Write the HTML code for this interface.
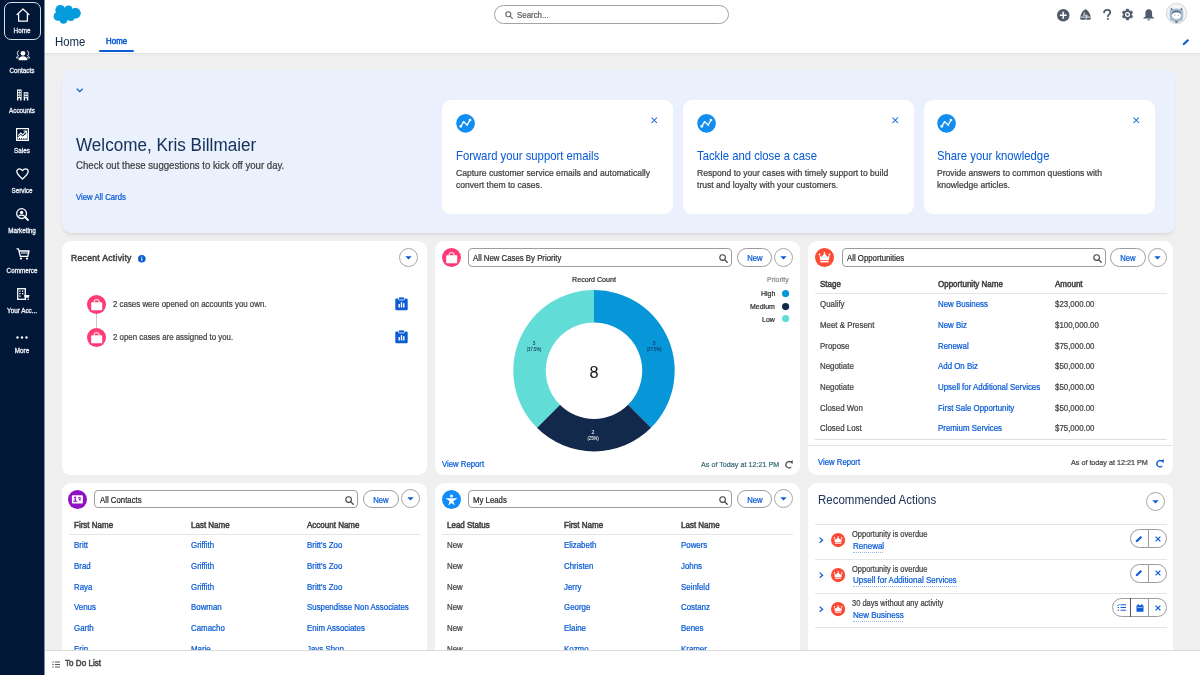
<!DOCTYPE html><html><head><meta charset="utf-8"><style>
html,body{margin:0;padding:0;width:1200px;height:675px;overflow:hidden;background:#f0f0f0;font-family:"Liberation Sans",sans-serif;}
.r{position:absolute;box-sizing:border-box;}
.t{position:absolute;line-height:1;white-space:nowrap;-webkit-text-stroke-width:0.22px;will-change:transform;}
svg.r{overflow:visible}
</style></head><body>

<div class="r" style="left:44.00px;top:0.00px;width:1156.00px;height:53.00px;background:#ffffff;"></div>
<div class="r" style="left:44.00px;top:52.50px;width:1156.00px;height:1.20px;background:#e2e2e2;box-shadow:0 1px 2px rgba(0,0,0,0.04);"></div>
<div class="r" style="left:0.00px;top:0.00px;width:44.00px;height:675.00px;background:#011738;"></div>
<div class="r" style="left:4.00px;top:2.00px;width:37.00px;height:38.00px;border:1px solid #d8dde6;border-radius:7px;"></div>
<svg class="r" style="left:15.50px;top:8.00px" width="14" height="14" viewBox="0 0 14 14"><path d="M1 6.6 L7 1 L13 6.6" fill="none" stroke="#fff" stroke-width="1.25" stroke-linejoin="round" stroke-linecap="round"/><path d="M2.6 5.3 V13 H11.4 V5.3" fill="none" stroke="#fff" stroke-width="1.25" stroke-linejoin="round"/></svg>
<div class="t" style="left:-78.00px;width:200px;text-align:center;top:28.46px;font-size:6.3px;color:#eef0f4;font-weight:normal;-webkit-text-stroke-width:0.3px;">Home</div>
<div class="t" style="left:-78.00px;width:200px;text-align:center;top:68.46px;font-size:6.3px;color:#eef0f4;font-weight:normal;-webkit-text-stroke-width:0.3px;">Contacts</div>
<div class="t" style="left:-78.00px;width:200px;text-align:center;top:108.46px;font-size:6.3px;color:#eef0f4;font-weight:normal;-webkit-text-stroke-width:0.3px;">Accounts</div>
<div class="t" style="left:-78.00px;width:200px;text-align:center;top:148.46px;font-size:6.3px;color:#eef0f4;font-weight:normal;-webkit-text-stroke-width:0.3px;">Sales</div>
<div class="t" style="left:-78.00px;width:200px;text-align:center;top:188.46px;font-size:6.3px;color:#eef0f4;font-weight:normal;-webkit-text-stroke-width:0.3px;">Service</div>
<div class="t" style="left:-78.00px;width:200px;text-align:center;top:228.46px;font-size:6.3px;color:#eef0f4;font-weight:normal;-webkit-text-stroke-width:0.3px;">Marketing</div>
<div class="t" style="left:-78.00px;width:200px;text-align:center;top:268.46px;font-size:6.3px;color:#eef0f4;font-weight:normal;-webkit-text-stroke-width:0.3px;">Commerce</div>
<div class="t" style="left:-78.00px;width:200px;text-align:center;top:307.96px;font-size:6.3px;color:#eef0f4;font-weight:normal;-webkit-text-stroke-width:0.3px;">Your Acc...</div>
<div class="t" style="left:-78.00px;width:200px;text-align:center;top:348.46px;font-size:6.3px;color:#eef0f4;font-weight:normal;-webkit-text-stroke-width:0.3px;">More</div>
<svg class="r" style="left:15.50px;top:49.50px" width="14" height="11" viewBox="0 0 14 11"><path d="M3.2 1 C1.9 1 1.3 2 1.3 3.2 C1.3 4.5 1.9 5.4 2.6 5.8 C1.2 6.3 0.4 7 0.4 8 H3" fill="none" stroke="#fff" stroke-width="0.9"/><path d="M10.8 1 C12.1 1 12.7 2 12.7 3.2 C12.7 4.5 12.1 5.4 11.4 5.8 C12.8 6.3 13.6 7 13.6 8 H11" fill="none" stroke="#fff" stroke-width="0.9"/><circle cx="7" cy="3.3" r="2.4" fill="#fff"/><path d="M2.6 10.3 C2.6 7.6 4.4 6.3 7 6.3 C9.6 6.3 11.4 7.6 11.4 10.3Z" fill="#fff"/></svg>
<svg class="r" style="left:16.80px;top:88.80px" width="12" height="12" viewBox="0 0 12 12"><path d="M0 0.6 H4.6 V11.4 H3.2 V9.2 H1.4 V11.4 H0Z" fill="#fff"/><path d="M6.7 3.2 H11.3 V11.4 H9.9 V9.2 H8.1 V11.4 H6.7Z" fill="#fff"/><g fill="#011738"><rect x="0.9" y="1.8" width="1.2" height="1.4"/><rect x="2.6" y="1.8" width="1.2" height="1.4"/><rect x="0.9" y="4.2" width="1.2" height="1.4"/><rect x="2.6" y="4.2" width="1.2" height="1.4"/><rect x="0.9" y="6.6" width="1.2" height="1.4"/><rect x="2.6" y="6.6" width="1.2" height="1.4"/><rect x="7.6" y="4.4" width="1.2" height="1.4"/><rect x="9.3" y="4.4" width="1.2" height="1.4"/><rect x="7.6" y="6.8" width="1.2" height="1.4"/><rect x="9.3" y="6.8" width="1.2" height="1.4"/></g></svg>
<svg class="r" style="left:16.00px;top:128.00px" width="13" height="13" viewBox="0 0 13 13"><rect x="0.6" y="0.6" width="11.8" height="11.8" fill="none" stroke="#fff" stroke-width="1.2"/><path d="M2.2 7.6 L4.8 5 L6.6 6.8 L10 3.4" fill="none" stroke="#fff" stroke-width="1.1"/><path d="M7.6 3 H10.4 V5.8" fill="none" stroke="#fff" stroke-width="1.1"/><path d="M1.5 11.5 V9.6 L4.8 6.8 L6.6 8.6 L11.5 4.8 V11.5Z" fill="#fff"/><g fill="#011738"><rect x="3" y="10" width="0.8" height="1.5"/><rect x="5.2" y="10" width="0.8" height="1.5"/><rect x="7.4" y="10" width="0.8" height="1.5"/><rect x="9.6" y="10" width="0.8" height="1.5"/></g></svg>
<svg class="r" style="left:15.50px;top:168.00px" width="13" height="12" viewBox="0 0 13 12"><path d="M6.5 11 C3 8 0.8 6 0.8 3.6 C0.8 2 2 0.8 3.5 0.8 C4.7 0.8 5.8 1.6 6.5 2.6 C7.2 1.6 8.3 0.8 9.5 0.8 C11 0.8 12.2 2 12.2 3.6 C12.2 6 10 8 6.5 11Z" fill="none" stroke="#fff" stroke-width="1.3" stroke-linejoin="round"/></svg>
<svg class="r" style="left:16.00px;top:208.00px" width="13" height="13" viewBox="0 0 13 13"><circle cx="5.6" cy="5.6" r="4.9" fill="none" stroke="#fff" stroke-width="1.3"/><circle cx="5.6" cy="4.4" r="1.7" fill="#fff"/><path d="M2.8 8.3 C3.5 6.8 7.7 6.8 8.4 8.3" fill="none" stroke="#fff" stroke-width="1.2"/><path d="M9 9 L12 12" stroke="#fff" stroke-width="1.8" stroke-linecap="round"/></svg>
<svg class="r" style="left:16.00px;top:248.00px" width="14" height="12" viewBox="0 0 14 12"><path d="M0.5 0.8 H2.5 L4.3 8.3 H11.8 L13 3 H3.3" fill="none" stroke="#fff" stroke-width="1.3" stroke-linejoin="round"/><circle cx="5" cy="10.6" r="1.1" fill="#fff"/><circle cx="11" cy="10.6" r="1.1" fill="#fff"/><path d="M5 5 H12" stroke="#fff" stroke-width="1"/></svg>
<svg class="r" style="left:16.50px;top:288.00px" width="13" height="12" viewBox="0 0 13 12"><rect x="0.7" y="0.7" width="7.6" height="10.6" fill="none" stroke="#fff" stroke-width="1.3"/><g fill="#fff"><rect x="2.3" y="2.5" width="1.3" height="1.3"/><rect x="5" y="2.5" width="1.3" height="1.3"/><rect x="2.3" y="5" width="1.3" height="1.3"/><rect x="5" y="5" width="1.3" height="1.3"/><rect x="2.3" y="7.5" width="1.3" height="1.3"/></g><path d="M7 7 H12.5 L11.8 9.8 H7.8Z" fill="#fff"/><circle cx="8.5" cy="11.2" r="0.8" fill="#fff"/><circle cx="11.2" cy="11.2" r="0.8" fill="#fff"/></svg>
<svg class="r" style="left:16.00px;top:336.00px" width="12" height="3" viewBox="0 0 12 3"><circle cx="1.5" cy="1.5" r="1.2" fill="#fff"/><circle cx="6" cy="1.5" r="1.2" fill="#fff"/><circle cx="10.5" cy="1.5" r="1.2" fill="#fff"/></svg>
<svg class="r" style="left:53.00px;top:4.00px" width="29" height="21" viewBox="0 0 29 21"><g fill="#049cdc"><circle cx="7.4" cy="6.1" r="5.1"/><circle cx="15.5" cy="5.5" r="3.9"/><circle cx="22.4" cy="9.2" r="5.4"/><circle cx="4.9" cy="12.4" r="4.3"/><circle cx="10.5" cy="15.6" r="4.2"/><circle cx="17.8" cy="13" r="3.9"/><ellipse cx="14" cy="10.5" rx="9" ry="5.5"/></g></svg>
<div class="r" style="left:494.00px;top:5.00px;width:235.00px;height:18.70px;border:1px solid #a3a3a3;border-radius:10px;background:#fff;"></div>
<svg class="r" style="left:504.50px;top:10.80px" width="8" height="8" viewBox="0 0 8 8"><circle cx="3.3" cy="3.3" r="2.5" fill="none" stroke="#666" stroke-width="1.1"/><path d="M5.1 5.1 L7.3 7.3" stroke="#666" stroke-width="1.2" stroke-linecap="round"/></svg>
<div class="t" style="left:517.00px;top:11.95px;font-size:7.9px;color:#5c5c5c;font-weight:normal;transform:scaleY(1.1);transform-origin:0 5.65px;">Search...</div>
<svg class="r" style="left:1056.60px;top:8.50px" width="12.5" height="12.5" viewBox="0 0 12.5 12.5"><circle cx="6.25" cy="6.25" r="6.25" fill="#4f5b69"/><path d="M6.25 2.8 V9.7 M2.8 6.25 H9.7" stroke="#fff" stroke-width="1.6"/></svg>
<svg class="r" style="left:1080.00px;top:9.20px" width="11" height="11" viewBox="0 0 11 11"><path d="M5.5 0.3 C8.3 1.3 10.8 5.8 10.8 9.2 Q10.8 10.8 9.2 10.8 H1.8 Q0.2 10.8 0.2 9.2 C0.2 5.8 2.7 1.3 5.5 0.3Z" fill="#4f5b69"/><path d="M0.4 8.1 H10.6" stroke="#fff" stroke-width="0.9"/><path d="M4.6 3.4 L3.4 6.2 H7.2 L5.8 10.8" fill="none" stroke="#fff" stroke-width="0.8"/></svg>
<svg class="r" style="left:1102.80px;top:9.20px" width="8.5" height="11" viewBox="0 0 8.5 11"><path d="M1.1 3.4 C1.1 1.6 2.5 0.9 4.2 0.9 C5.9 0.9 7.3 1.8 7.3 3.4 C7.3 5.3 4.9 5.4 4.9 7.3" fill="none" stroke="#4f5b69" stroke-width="1.75" stroke-linecap="round"/><circle cx="4.9" cy="9.9" r="1" fill="#4f5b69"/></svg>
<svg class="r" style="left:1122.30px;top:9.10px" width="11" height="11" viewBox="0 0 11 11"><path d="M4.45 0.10 L6.55 0.10 L7.35 2.30 L9.65 1.89 L10.70 3.71 L9.20 5.50 L10.70 7.29 L9.65 9.11 L7.35 8.70 L6.55 10.90 L4.45 10.90 L3.65 8.70 L1.35 9.11 L0.30 7.29 L1.80 5.50 L0.30 3.71 L1.35 1.89 L3.65 2.30Z" fill="#4f5b69" stroke="#4f5b69" stroke-width="0.6" stroke-linejoin="round"/><circle cx="5.5" cy="5.5" r="2.5" fill="#fff"/><circle cx="5.5" cy="5.5" r="1.2" fill="#4f5b69"/></svg>
<svg class="r" style="left:1143.00px;top:8.80px" width="11.5" height="11.5" viewBox="0 0 11.5 11.5"><path d="M5.75 0.2 C3.3 0.2 2.4 2 2.4 4 V7.4 L0.3 9 V9.4 H11.2 V9 L9.1 7.4 V4 C9.1 2 8.2 0.2 5.75 0.2Z" fill="#4f5b69"/><path d="M4.6 10.8 H6.9" stroke="#4f5b69" stroke-width="1.1"/></svg>
<svg class="r" style="left:1166.00px;top:2.80px" width="21" height="21" viewBox="0 0 21 21"><circle cx="10.5" cy="10.5" r="10.1" fill="#f4f6f9" stroke="#c8c8c8" stroke-width="0.8"/><path d="M4.4 17 C3.2 13 3.4 7.5 5 4.6 L6.8 6.2 C9.2 5.3 11.8 5.3 14.2 6.2 L16 4.6 C17.6 7.5 17.8 13 16.6 17 C14 19.6 7 19.6 4.4 17Z" fill="#a7bad0"/><path d="M5 4.6 L6.8 6.2 L5.6 7.6Z M16 4.6 L14.2 6.2 L15.4 7.6Z" fill="#4e6582"/><path d="M6 11 C6.5 8.2 8.3 7.4 10.5 7.4 C12.7 7.4 14.5 8.2 15 11Z" fill="#4e6582"/><ellipse cx="10.5" cy="12.6" rx="4.4" ry="3.4" fill="#fff"/><circle cx="8.7" cy="12.3" r="0.55" fill="#7f93ad"/><circle cx="12.3" cy="12.3" r="0.55" fill="#7f93ad"/><path d="M9 18.2 H12 L11.5 19.8 H9.5Z" fill="#4e6582"/></svg>
<div class="t" style="left:54.50px;top:36.71px;font-size:11.4px;color:#16304f;font-weight:normal;transform:scaleY(1.06);transform-origin:0 8.79px;-webkit-text-stroke-width:0.04px;">Home</div>
<div class="t" style="left:105.90px;top:38.26px;font-size:7.8px;color:#0b5cd5;font-weight:normal;transform:scaleY(1.05);transform-origin:0 5.64px;-webkit-text-stroke-width:0.5px;letter-spacing:0.1px;">Home</div>
<div class="r" style="left:99.00px;top:50.30px;width:35.00px;height:2.00px;background:#0b5cd5;border-radius:1px;"></div>
<svg class="r" style="left:1182.00px;top:38.00px" width="8" height="8" viewBox="0 0 8 8"><path d="M0.8 7.2 L1.2 5.3 L5.6 0.9 L7.1 2.4 L2.7 6.8Z" fill="#0b5cd5"/></svg>
<div class="r" style="left:61.50px;top:70.00px;width:1113.00px;height:162.80px;background:#eaf1fd;border-radius:9px;box-shadow:0 4px 4px -1px rgba(0,0,0,0.055), 0 1px 2px rgba(0,0,0,0.05);"></div>
<svg class="r" style="left:76.30px;top:88.00px" width="7.5" height="4.5" viewBox="0 0 7.5 4.5"><path d="M0.8 0.8 L3.75 3.6 L6.7 0.8" fill="none" stroke="#0b5cd5" stroke-width="1.3"/></svg>
<div class="t" style="left:76.00px;top:136.73px;font-size:17.1px;color:#17325a;font-weight:normal;transform:scaleY(1.06);transform-origin:0 13.97px;-webkit-text-stroke-width:0.04px;">Welcome, Kris Billmaier</div>
<div class="t" style="left:75.60px;top:161.47px;font-size:9.65px;color:#3e3e3e;font-weight:normal;transform:scaleY(1.1);transform-origin:0 7.73px;">Check out these suggestions to kick off your day.</div>
<div class="t" style="left:76.00px;top:194.16px;font-size:7.75px;color:#0b5cd5;font-weight:normal;transform:scaleY(1.1);transform-origin:0 5.64px;">View All Cards</div>
<div class="r" style="left:442.00px;top:99.50px;width:231.00px;height:114.50px;background:#fff;border-radius:9px;"></div>
<svg class="r" style="left:455.50px;top:113.80px" width="19" height="19" viewBox="0 0 19 19"><circle cx="9.55" cy="9.4" r="9.3" fill="#118cf0"/><path d="M4.8 12.3 L7.6 7.8 L11.2 10.9 L14 6" fill="none" stroke="#fff" stroke-width="1.3" stroke-linejoin="round"/><circle cx="4.8" cy="12.3" r="1.35" fill="#fff"/><circle cx="14" cy="6" r="1.35" fill="#fff"/><circle cx="7.6" cy="7.8" r="0.9" fill="#fff"/><circle cx="11.2" cy="10.9" r="0.9" fill="#fff"/></svg>
<svg class="r" style="left:651.20px;top:117.20px" width="6.5" height="6.5" viewBox="0 0 6.5 6.5"><path d="M0.5 0.5 L6 6 M6 0.5 L0.5 6" stroke="#0b5cd5" stroke-width="1.05"/></svg>
<div class="t" style="left:455.60px;top:151.21px;font-size:11.3px;color:#0b5cd5;font-weight:normal;transform:scaleY(1.06);transform-origin:0 8.79px;-webkit-text-stroke-width:0.04px;">Forward your support emails</div>
<div class="t" style="left:455.60px;top:168.93px;font-size:8.58px;color:#3e3e3e;font-weight:normal;transform:scaleY(1.1);transform-origin:0 6.67px;">Capture customer service emails and automatically</div>
<div class="t" style="left:455.60px;top:181.33px;font-size:8.58px;color:#3e3e3e;font-weight:normal;transform:scaleY(1.1);transform-origin:0 6.67px;">convert them to cases.</div>
<div class="r" style="left:683.00px;top:99.50px;width:231.00px;height:114.50px;background:#fff;border-radius:9px;"></div>
<svg class="r" style="left:696.50px;top:113.80px" width="19" height="19" viewBox="0 0 19 19"><circle cx="9.55" cy="9.4" r="9.3" fill="#118cf0"/><path d="M4.8 12.3 L7.6 7.8 L11.2 10.9 L14 6" fill="none" stroke="#fff" stroke-width="1.3" stroke-linejoin="round"/><circle cx="4.8" cy="12.3" r="1.35" fill="#fff"/><circle cx="14" cy="6" r="1.35" fill="#fff"/><circle cx="7.6" cy="7.8" r="0.9" fill="#fff"/><circle cx="11.2" cy="10.9" r="0.9" fill="#fff"/></svg>
<svg class="r" style="left:892.20px;top:117.20px" width="6.5" height="6.5" viewBox="0 0 6.5 6.5"><path d="M0.5 0.5 L6 6 M6 0.5 L0.5 6" stroke="#0b5cd5" stroke-width="1.05"/></svg>
<div class="t" style="left:696.60px;top:151.21px;font-size:11.3px;color:#0b5cd5;font-weight:normal;transform:scaleY(1.06);transform-origin:0 8.79px;-webkit-text-stroke-width:0.04px;">Tackle and close a case</div>
<div class="t" style="left:696.60px;top:168.93px;font-size:8.58px;color:#3e3e3e;font-weight:normal;transform:scaleY(1.1);transform-origin:0 6.67px;">Respond to your cases with timely support to build</div>
<div class="t" style="left:696.60px;top:181.33px;font-size:8.58px;color:#3e3e3e;font-weight:normal;transform:scaleY(1.1);transform-origin:0 6.67px;">trust and loyalty with your customers.</div>
<div class="r" style="left:923.50px;top:99.50px;width:231.00px;height:114.50px;background:#fff;border-radius:9px;"></div>
<svg class="r" style="left:937.00px;top:113.80px" width="19" height="19" viewBox="0 0 19 19"><circle cx="9.55" cy="9.4" r="9.3" fill="#118cf0"/><path d="M4.8 12.3 L7.6 7.8 L11.2 10.9 L14 6" fill="none" stroke="#fff" stroke-width="1.3" stroke-linejoin="round"/><circle cx="4.8" cy="12.3" r="1.35" fill="#fff"/><circle cx="14" cy="6" r="1.35" fill="#fff"/><circle cx="7.6" cy="7.8" r="0.9" fill="#fff"/><circle cx="11.2" cy="10.9" r="0.9" fill="#fff"/></svg>
<svg class="r" style="left:1132.70px;top:117.20px" width="6.5" height="6.5" viewBox="0 0 6.5 6.5"><path d="M0.5 0.5 L6 6 M6 0.5 L0.5 6" stroke="#0b5cd5" stroke-width="1.05"/></svg>
<div class="t" style="left:937.10px;top:151.21px;font-size:11.3px;color:#0b5cd5;font-weight:normal;transform:scaleY(1.06);transform-origin:0 8.79px;-webkit-text-stroke-width:0.04px;">Share your knowledge</div>
<div class="t" style="left:937.10px;top:168.93px;font-size:8.58px;color:#3e3e3e;font-weight:normal;transform:scaleY(1.1);transform-origin:0 6.67px;">Provide answers to common questions with</div>
<div class="t" style="left:937.10px;top:181.33px;font-size:8.58px;color:#3e3e3e;font-weight:normal;transform:scaleY(1.1);transform-origin:0 6.67px;">knowledge articles.</div>
<div class="r" style="left:61.60px;top:241.00px;width:365.10px;height:234.00px;background:#fff;border-radius:9px;"></div>
<div class="r" style="left:435.10px;top:241.00px;width:365.10px;height:234.00px;background:#fff;border-radius:9px;"></div>
<div class="r" style="left:808.40px;top:241.00px;width:365.10px;height:234.00px;background:#fff;border-radius:9px;"></div>
<div class="r" style="left:61.60px;top:483.00px;width:365.10px;height:250.00px;background:#fff;border-radius:9px;"></div>
<div class="r" style="left:435.10px;top:483.00px;width:365.10px;height:250.00px;background:#fff;border-radius:9px;"></div>
<div class="r" style="left:808.40px;top:483.00px;width:365.10px;height:250.00px;background:#fff;border-radius:9px;"></div>
<div class="t" style="left:71.20px;top:254.23px;font-size:8.6px;color:#444444;font-weight:normal;-webkit-text-stroke-width:0.5px;letter-spacing:0.29px;">Recent Activity</div>
<svg class="r" style="left:137.70px;top:254.60px" width="7.6" height="7.6" viewBox="0 0 7.6 7.6"><circle cx="3.8" cy="3.8" r="3.8" fill="#0b5cd5"/><path d="M3.8 3.3 V5.8" stroke="#fff" stroke-width="1.1"/><circle cx="3.8" cy="2.1" r="0.6" fill="#fff"/></svg>
<svg class="r" style="left:398.50px;top:248.10px" width="19" height="19" viewBox="0 0 19 19"><circle cx="9.5" cy="9.5" r="9" fill="#fff" stroke="#9c9c9c" stroke-width="0.9"/><path d="M6.3 8.2 H12.7 L9.5 11.4Z" fill="#0b5cd5"/></svg>
<div class="r" style="left:95.60px;top:313.00px;width:1.30px;height:16.00px;background:#c9c9c9;"></div>
<svg class="r" style="left:87.00px;top:295.00px" width="19" height="19" viewBox="0 0 19 19"><g transform="scale(1.0)"><circle cx="9.5" cy="9.5" r="9.5" fill="#fe3b76"/><rect x="4.2" y="7.2" width="11" height="8" rx="0.8" fill="#fff"/><path d="M7.3 7.3 V5.6 C7.3 5.1 7.7 4.8 8.1 4.8 H11.2 C11.7 4.8 12 5.1 12 5.6 V7.3" fill="none" stroke="#fff" stroke-width="1"/></g></svg>
<svg class="r" style="left:87.00px;top:328.00px" width="19" height="19" viewBox="0 0 19 19"><g transform="scale(1.0)"><circle cx="9.5" cy="9.5" r="9.5" fill="#fe3b76"/><rect x="4.2" y="7.2" width="11" height="8" rx="0.8" fill="#fff"/><path d="M7.3 7.3 V5.6 C7.3 5.1 7.7 4.8 8.1 4.8 H11.2 C11.7 4.8 12 5.1 12 5.6 V7.3" fill="none" stroke="#fff" stroke-width="1"/></g></svg>
<div class="t" style="left:113.00px;top:300.85px;font-size:7.9px;color:#444444;font-weight:normal;transform:scaleY(1.1);transform-origin:0 5.65px;">2 cases were opened on accounts you own.</div>
<div class="t" style="left:113.00px;top:333.55px;font-size:7.9px;color:#444444;font-weight:normal;transform:scaleY(1.1);transform-origin:0 5.65px;">2 open cases are assigned to you.</div>
<svg class="r" style="left:395.00px;top:296.60px" width="13" height="13.2" viewBox="0 0 13 13.2"><rect x="0.3" y="1.5" width="12.4" height="11.7" rx="1.2" fill="#0b5cd5"/><rect x="3.5" y="0" width="6" height="3" rx="1" fill="#0b5cd5" stroke="#fff" stroke-width="0.8"/><g fill="#fff"><rect x="3.5" y="7" width="1.4" height="3.5"/><rect x="5.8" y="5.2" width="1.4" height="5.3"/><rect x="8.1" y="6.2" width="1.4" height="4.3"/></g></svg>
<svg class="r" style="left:395.00px;top:329.50px" width="13" height="13.2" viewBox="0 0 13 13.2"><rect x="0.3" y="1.5" width="12.4" height="11.7" rx="1.2" fill="#0b5cd5"/><rect x="3.5" y="0" width="6" height="3" rx="1" fill="#0b5cd5" stroke="#fff" stroke-width="0.8"/><g fill="#fff"><rect x="3.5" y="7" width="1.4" height="3.5"/><rect x="5.8" y="5.2" width="1.4" height="5.3"/><rect x="8.1" y="6.2" width="1.4" height="4.3"/></g></svg>
<svg class="r" style="left:442.00px;top:248.00px" width="19" height="19" viewBox="0 0 19 19"><g transform="scale(1.0)"><circle cx="9.5" cy="9.5" r="9.5" fill="#fe3b76"/><rect x="4.2" y="7.2" width="11" height="8" rx="0.8" fill="#fff"/><path d="M7.3 7.3 V5.6 C7.3 5.1 7.7 4.8 8.1 4.8 H11.2 C11.7 4.8 12 5.1 12 5.6 V7.3" fill="none" stroke="#fff" stroke-width="1"/></g></svg>
<div class="r" style="left:467.80px;top:248.40px;width:264.60px;height:18.20px;border:1px solid #9c9c9c;border-radius:4px;background:#fff;"></div>
<div class="t" style="left:473.10px;top:255.26px;font-size:7.8px;color:#2e2e2e;font-weight:normal;transform:scaleY(1.1);transform-origin:0 5.64px;">All New Cases By Priority</div>
<svg class="r" style="left:719.10px;top:254.00px" width="9" height="9" viewBox="0 0 9 9"><circle cx="3.6" cy="3.6" r="2.8" fill="none" stroke="#444" stroke-width="1.1"/><path d="M5.6 5.6 L8.2 8.2" stroke="#444" stroke-width="1.3" stroke-linecap="round"/></svg>
<div class="r" style="left:736.90px;top:248.00px;width:35.50px;height:18.70px;border:1px solid #9c9c9c;border-radius:9.5px;background:#fff;"></div>
<div class="t" style="left:654.65px;width:200px;text-align:center;top:255.38px;font-size:7.7px;color:#0b5cd5;font-weight:normal;transform:scaleY(1.1);transform-origin:0 5.62px;">New</div>
<svg class="r" style="left:774.10px;top:248.00px" width="19" height="19" viewBox="0 0 19 19"><circle cx="9.5" cy="9.5" r="9" fill="#fff" stroke="#9c9c9c" stroke-width="0.9"/><path d="M6.3 8.2 H12.7 L9.5 11.4Z" fill="#0b5cd5"/></svg>
<div class="t" style="left:494.00px;width:200px;text-align:center;top:277.40px;font-size:7.1px;color:#2e2e2e;font-weight:normal;transform:scaleY(1.1);transform-origin:0 4.60px;">Record Count</div>
<div class="t" style="right:411.60px;top:275.71px;font-size:7.0px;color:#8a8a8a;font-weight:normal;transform:scaleY(1.1);transform-origin:0 5.59px;">Priority</div>
<div class="t" style="right:424.70px;top:290.41px;font-size:7.0px;color:#2e2e2e;font-weight:normal;transform:scaleY(1.1);transform-origin:0 5.59px;">High</div>
<div class="t" style="right:424.70px;top:303.41px;font-size:7.0px;color:#2e2e2e;font-weight:normal;transform:scaleY(1.1);transform-origin:0 5.59px;">Medium</div>
<div class="t" style="right:424.70px;top:316.21px;font-size:7.0px;color:#2e2e2e;font-weight:normal;transform:scaleY(1.1);transform-origin:0 5.59px;">Low</div>
<svg class="r" style="left:781.60px;top:289.70px" width="7.2" height="7.2" viewBox="0 0 7.2 7.2"><circle cx="3.6" cy="3.6" r="3.6" fill="#0797d9"/></svg>
<svg class="r" style="left:781.60px;top:302.70px" width="7.2" height="7.2" viewBox="0 0 7.2 7.2"><circle cx="3.6" cy="3.6" r="3.6" fill="#13294b"/></svg>
<svg class="r" style="left:781.60px;top:315.40px" width="7.2" height="7.2" viewBox="0 0 7.2 7.2"><circle cx="3.6" cy="3.6" r="3.6" fill="#62dcd7"/></svg>
<svg class="r" style="left:0;top:0" width="1200" height="675" viewBox="0 0 1200 675"><path d="M594.00 290.00 A80.7 80.7 0 0 1 651.06 427.76 L628.08 404.78 A48.2 48.2 0 0 0 594.00 322.50Z" fill="#0797d9"/><path d="M651.06 427.76 A80.7 80.7 0 0 1 536.94 427.76 L559.92 404.78 A48.2 48.2 0 0 0 628.08 404.78Z" fill="#13294b"/><path d="M536.94 427.76 A80.7 80.7 0 0 1 594.00 290.00 L594.00 322.50 A48.2 48.2 0 0 0 559.92 404.78Z" fill="#62dcd7"/></svg>
<div class="t" style="left:494.00px;width:200px;text-align:center;top:363.85px;font-size:16.2px;color:#181818;font-weight:normal;transform:scaleY(1.06);transform-origin:0 13.95px;-webkit-text-stroke-width:0.04px;">8</div>
<div class="t" style="left:434.00px;width:200px;text-align:center;top:341.02px;font-size:5.2px;color:#13294b;font-weight:normal;transform:scaleY(1.1);transform-origin:0 3.48px;-webkit-text-stroke-width:0.04px;">3</div>
<div class="t" style="left:434.00px;width:200px;text-align:center;top:348.16px;font-size:4.2px;color:#13294b;font-weight:normal;transform:scaleY(1.1);transform-origin:0 2.44px;-webkit-text-stroke-width:0.04px;">(37.5%)</div>
<div class="t" style="left:553.50px;width:200px;text-align:center;top:341.02px;font-size:5.2px;color:#13294b;font-weight:normal;transform:scaleY(1.1);transform-origin:0 3.48px;-webkit-text-stroke-width:0.04px;">3</div>
<div class="t" style="left:553.50px;width:200px;text-align:center;top:348.16px;font-size:4.2px;color:#13294b;font-weight:normal;transform:scaleY(1.1);transform-origin:0 2.44px;-webkit-text-stroke-width:0.04px;">(37.5%)</div>
<div class="t" style="left:493.40px;width:200px;text-align:center;top:429.92px;font-size:5.2px;color:#ffffff;font-weight:normal;transform:scaleY(1.1);transform-origin:0 3.48px;-webkit-text-stroke-width:0.04px;">2</div>
<div class="t" style="left:493.40px;width:200px;text-align:center;top:437.16px;font-size:4.2px;color:#ffffff;font-weight:normal;transform:scaleY(1.1);transform-origin:0 2.44px;-webkit-text-stroke-width:0.04px;">(25%)</div>
<div class="t" style="left:442.00px;top:460.66px;font-size:7.75px;color:#0b5cd5;font-weight:normal;transform:scaleY(1.1);transform-origin:0 5.64px;">View Report</div>
<div class="t" style="right:421.00px;top:460.89px;font-size:7.2px;color:#3c6d7a;font-weight:normal;transform:scaleY(1.1);transform-origin:0 5.61px;">As of Today at 12:21 PM</div>
<svg class="r" style="left:784.50px;top:459.50px" width="8.5" height="8.5" viewBox="0 0 8.5 8.5"><path d="M6.2 6.9 A3.1 3.1 0 1 1 5.6 2.1" fill="none" stroke="#555" stroke-width="1.25"/><path d="M8 0.3 L4.6 1.4 L7.4 4.3Z" fill="#555"/></svg>
<svg class="r" style="left:815.00px;top:247.90px" width="19" height="19" viewBox="0 0 19 19"><g transform="scale(1.0)"><circle cx="9.5" cy="9.5" r="9.5" fill="#fd4a33"/><path d="M4.5 6.5 L6.5 9 L9.5 5.3 L12.5 9 L14.5 6.5 L14 12 H5Z" fill="#fff"/><rect x="5.3" y="12.8" width="8.4" height="1.6" fill="#fff"/><circle cx="4.5" cy="6.3" r="0.9" fill="#fff"/><circle cx="9.5" cy="4.8" r="0.9" fill="#fff"/><circle cx="14.5" cy="6.3" r="0.9" fill="#fff"/></g></svg>
<div class="r" style="left:841.50px;top:248.40px;width:264.30px;height:18.20px;border:1px solid #9c9c9c;border-radius:4px;background:#fff;"></div>
<div class="t" style="left:846.80px;top:255.26px;font-size:7.8px;color:#2e2e2e;font-weight:normal;transform:scaleY(1.1);transform-origin:0 5.64px;">All Opportunities</div>
<svg class="r" style="left:1092.50px;top:254.00px" width="9" height="9" viewBox="0 0 9 9"><circle cx="3.6" cy="3.6" r="2.8" fill="none" stroke="#444" stroke-width="1.1"/><path d="M5.6 5.6 L8.2 8.2" stroke="#444" stroke-width="1.3" stroke-linecap="round"/></svg>
<div class="r" style="left:1110.00px;top:248.00px;width:35.50px;height:18.70px;border:1px solid #9c9c9c;border-radius:9.5px;background:#fff;"></div>
<div class="t" style="left:1027.75px;width:200px;text-align:center;top:255.38px;font-size:7.7px;color:#0b5cd5;font-weight:normal;transform:scaleY(1.1);transform-origin:0 5.62px;">New</div>
<svg class="r" style="left:1147.80px;top:248.10px" width="19" height="19" viewBox="0 0 19 19"><circle cx="9.5" cy="9.5" r="9" fill="#fff" stroke="#9c9c9c" stroke-width="0.9"/><path d="M6.3 8.2 H12.7 L9.5 11.4Z" fill="#0b5cd5"/></svg>
<div class="t" style="left:820.30px;top:280.75px;font-size:8.0px;color:#444444;font-weight:normal;transform:scaleY(1.1);transform-origin:0 5.65px;-webkit-text-stroke-width:0.5px;">Stage</div>
<div class="t" style="left:937.50px;top:280.75px;font-size:8.0px;color:#444444;font-weight:normal;transform:scaleY(1.1);transform-origin:0 5.65px;-webkit-text-stroke-width:0.5px;">Opportunity Name</div>
<div class="t" style="left:1054.75px;top:280.75px;font-size:8.0px;color:#444444;font-weight:normal;transform:scaleY(1.1);transform-origin:0 5.65px;-webkit-text-stroke-width:0.5px;">Amount</div>
<div class="r" style="left:815.20px;top:293.00px;width:351.50px;height:1.00px;background:#e5e5e5;"></div>
<div class="t" style="left:820.30px;top:301.05px;font-size:7.9px;color:#444444;font-weight:normal;transform:scaleY(1.1);transform-origin:0 5.65px;">Qualify</div>
<div class="t" style="left:937.50px;top:301.05px;font-size:7.9px;color:#0b5cd5;font-weight:normal;transform:scaleY(1.1);transform-origin:0 5.65px;">New Business</div>
<div class="t" style="left:1054.75px;top:301.05px;font-size:7.9px;color:#444444;font-weight:normal;transform:scaleY(1.1);transform-origin:0 5.65px;">$23,000.00</div>
<div class="t" style="left:820.30px;top:321.78px;font-size:7.9px;color:#444444;font-weight:normal;transform:scaleY(1.1);transform-origin:0 5.65px;">Meet &amp; Present</div>
<div class="t" style="left:937.50px;top:321.78px;font-size:7.9px;color:#0b5cd5;font-weight:normal;transform:scaleY(1.1);transform-origin:0 5.65px;">New Biz</div>
<div class="t" style="left:1054.75px;top:321.78px;font-size:7.9px;color:#444444;font-weight:normal;transform:scaleY(1.1);transform-origin:0 5.65px;">$100,000.00</div>
<div class="t" style="left:820.30px;top:342.51px;font-size:7.9px;color:#444444;font-weight:normal;transform:scaleY(1.1);transform-origin:0 5.65px;">Propose</div>
<div class="t" style="left:937.50px;top:342.51px;font-size:7.9px;color:#0b5cd5;font-weight:normal;transform:scaleY(1.1);transform-origin:0 5.65px;">Renewal</div>
<div class="t" style="left:1054.75px;top:342.51px;font-size:7.9px;color:#444444;font-weight:normal;transform:scaleY(1.1);transform-origin:0 5.65px;">$75,000.00</div>
<div class="t" style="left:820.30px;top:363.24px;font-size:7.9px;color:#444444;font-weight:normal;transform:scaleY(1.1);transform-origin:0 5.65px;">Negotiate</div>
<div class="t" style="left:937.50px;top:363.24px;font-size:7.9px;color:#0b5cd5;font-weight:normal;transform:scaleY(1.1);transform-origin:0 5.65px;">Add On Biz</div>
<div class="t" style="left:1054.75px;top:363.24px;font-size:7.9px;color:#444444;font-weight:normal;transform:scaleY(1.1);transform-origin:0 5.65px;">$50,000.00</div>
<div class="t" style="left:820.30px;top:383.97px;font-size:7.9px;color:#444444;font-weight:normal;transform:scaleY(1.1);transform-origin:0 5.65px;">Negotiate</div>
<div class="t" style="left:937.50px;top:383.97px;font-size:7.9px;color:#0b5cd5;font-weight:normal;transform:scaleY(1.1);transform-origin:0 5.65px;">Upsell for Additional Services</div>
<div class="t" style="left:1054.75px;top:383.97px;font-size:7.9px;color:#444444;font-weight:normal;transform:scaleY(1.1);transform-origin:0 5.65px;">$50,000.00</div>
<div class="t" style="left:820.30px;top:404.70px;font-size:7.9px;color:#444444;font-weight:normal;transform:scaleY(1.1);transform-origin:0 5.65px;">Closed Won</div>
<div class="t" style="left:937.50px;top:404.70px;font-size:7.9px;color:#0b5cd5;font-weight:normal;transform:scaleY(1.1);transform-origin:0 5.65px;">First Sale Opportunity</div>
<div class="t" style="left:1054.75px;top:404.70px;font-size:7.9px;color:#444444;font-weight:normal;transform:scaleY(1.1);transform-origin:0 5.65px;">$50,000.00</div>
<div class="t" style="left:820.30px;top:425.43px;font-size:7.9px;color:#444444;font-weight:normal;transform:scaleY(1.1);transform-origin:0 5.65px;">Closed Lost</div>
<div class="t" style="left:937.50px;top:425.43px;font-size:7.9px;color:#0b5cd5;font-weight:normal;transform:scaleY(1.1);transform-origin:0 5.65px;">Premium Services</div>
<div class="t" style="left:1054.75px;top:425.43px;font-size:7.9px;color:#444444;font-weight:normal;transform:scaleY(1.1);transform-origin:0 5.65px;">$75,000.00</div>
<div class="r" style="left:815.20px;top:439.00px;width:351.50px;height:1.00px;background:#dddddd;"></div>
<div class="r" style="left:808.40px;top:444.50px;width:365.10px;height:1.00px;background:#e5e5e5;"></div>
<div class="t" style="left:818.00px;top:459.16px;font-size:7.75px;color:#0b5cd5;font-weight:normal;transform:scaleY(1.1);transform-origin:0 5.64px;">View Report</div>
<div class="t" style="right:51.80px;top:459.39px;font-size:7.2px;color:#444444;font-weight:normal;transform:scaleY(1.1);transform-origin:0 5.61px;">As of today at 12:21 PM</div>
<svg class="r" style="left:1155.80px;top:458.60px" width="8.5" height="8.5" viewBox="0 0 8.5 8.5"><path d="M6.2 6.9 A3.1 3.1 0 1 1 5.6 2.1" fill="none" stroke="#0b5cd5" stroke-width="1.25"/><path d="M8 0.3 L4.6 1.4 L7.4 4.3Z" fill="#0b5cd5"/></svg>
<svg class="r" style="left:68.20px;top:489.80px" width="19" height="19" viewBox="0 0 19 19"><circle cx="9.5" cy="9.5" r="9.5" fill="#9012c6"/><rect x="3.9" y="5.2" width="11" height="8.2" rx="1" fill="#fff"/><circle cx="7.2" cy="7.6" r="1.1" fill="#9012c6"/><path d="M6.6 8.6 H7.8 V10.4 L9.3 11 V11.8 H5.1 V11 L6.6 10.4Z" fill="#9012c6"/><rect x="10.2" y="7.2" width="2.6" height="1.3" fill="#9012c6"/><rect x="11" y="9" width="1.8" height="1.3" fill="#9012c6"/></svg>
<div class="r" style="left:94.30px;top:490.10px;width:264.10px;height:18.20px;border:1px solid #9c9c9c;border-radius:4px;background:#fff;"></div>
<div class="t" style="left:99.60px;top:496.96px;font-size:7.8px;color:#2e2e2e;font-weight:normal;transform:scaleY(1.1);transform-origin:0 5.64px;">All Contacts</div>
<svg class="r" style="left:345.10px;top:495.70px" width="9" height="9" viewBox="0 0 9 9"><circle cx="3.6" cy="3.6" r="2.8" fill="none" stroke="#444" stroke-width="1.1"/><path d="M5.6 5.6 L8.2 8.2" stroke="#444" stroke-width="1.3" stroke-linecap="round"/></svg>
<div class="r" style="left:363.00px;top:489.50px;width:35.60px;height:18.70px;border:1px solid #9c9c9c;border-radius:9.5px;background:#fff;"></div>
<div class="t" style="left:280.80px;width:200px;text-align:center;top:496.88px;font-size:7.7px;color:#0b5cd5;font-weight:normal;transform:scaleY(1.1);transform-origin:0 5.62px;">New</div>
<svg class="r" style="left:400.90px;top:489.40px" width="19" height="19" viewBox="0 0 19 19"><circle cx="9.5" cy="9.5" r="9" fill="#fff" stroke="#9c9c9c" stroke-width="0.9"/><path d="M6.3 8.2 H12.7 L9.5 11.4Z" fill="#0b5cd5"/></svg>
<div class="t" style="left:73.60px;top:522.35px;font-size:8.0px;color:#444444;font-weight:normal;transform:scaleY(1.1);transform-origin:0 5.65px;-webkit-text-stroke-width:0.5px;">First Name</div>
<div class="t" style="left:190.50px;top:522.35px;font-size:8.0px;color:#444444;font-weight:normal;transform:scaleY(1.1);transform-origin:0 5.65px;-webkit-text-stroke-width:0.5px;">Last Name</div>
<div class="t" style="left:307.40px;top:522.35px;font-size:8.0px;color:#444444;font-weight:normal;transform:scaleY(1.1);transform-origin:0 5.65px;-webkit-text-stroke-width:0.5px;">Account Name</div>
<div class="r" style="left:68.75px;top:534.00px;width:351.00px;height:1.00px;background:#e5e5e5;"></div>
<div class="t" style="left:73.60px;top:542.25px;font-size:7.9px;color:#0b5cd5;font-weight:normal;transform:scaleY(1.1);transform-origin:0 5.65px;">Britt</div>
<div class="t" style="left:190.50px;top:542.25px;font-size:7.9px;color:#0b5cd5;font-weight:normal;transform:scaleY(1.1);transform-origin:0 5.65px;">Griffith</div>
<div class="t" style="left:307.40px;top:542.25px;font-size:7.9px;color:#0b5cd5;font-weight:normal;transform:scaleY(1.1);transform-origin:0 5.65px;">Britt's Zoo</div>
<div class="t" style="left:73.60px;top:562.95px;font-size:7.9px;color:#0b5cd5;font-weight:normal;transform:scaleY(1.1);transform-origin:0 5.65px;">Brad</div>
<div class="t" style="left:190.50px;top:562.95px;font-size:7.9px;color:#0b5cd5;font-weight:normal;transform:scaleY(1.1);transform-origin:0 5.65px;">Griffith</div>
<div class="t" style="left:307.40px;top:562.95px;font-size:7.9px;color:#0b5cd5;font-weight:normal;transform:scaleY(1.1);transform-origin:0 5.65px;">Britt's Zoo</div>
<div class="t" style="left:73.60px;top:583.65px;font-size:7.9px;color:#0b5cd5;font-weight:normal;transform:scaleY(1.1);transform-origin:0 5.65px;">Raya</div>
<div class="t" style="left:190.50px;top:583.65px;font-size:7.9px;color:#0b5cd5;font-weight:normal;transform:scaleY(1.1);transform-origin:0 5.65px;">Griffith</div>
<div class="t" style="left:307.40px;top:583.65px;font-size:7.9px;color:#0b5cd5;font-weight:normal;transform:scaleY(1.1);transform-origin:0 5.65px;">Britt's Zoo</div>
<div class="t" style="left:73.60px;top:604.35px;font-size:7.9px;color:#0b5cd5;font-weight:normal;transform:scaleY(1.1);transform-origin:0 5.65px;">Venus</div>
<div class="t" style="left:190.50px;top:604.35px;font-size:7.9px;color:#0b5cd5;font-weight:normal;transform:scaleY(1.1);transform-origin:0 5.65px;">Bowman</div>
<div class="t" style="left:307.40px;top:604.35px;font-size:7.9px;color:#0b5cd5;font-weight:normal;transform:scaleY(1.1);transform-origin:0 5.65px;">Suspendisse Non Associates</div>
<div class="t" style="left:73.60px;top:625.05px;font-size:7.9px;color:#0b5cd5;font-weight:normal;transform:scaleY(1.1);transform-origin:0 5.65px;">Garth</div>
<div class="t" style="left:190.50px;top:625.05px;font-size:7.9px;color:#0b5cd5;font-weight:normal;transform:scaleY(1.1);transform-origin:0 5.65px;">Camacho</div>
<div class="t" style="left:307.40px;top:625.05px;font-size:7.9px;color:#0b5cd5;font-weight:normal;transform:scaleY(1.1);transform-origin:0 5.65px;">Enim Associates</div>
<div class="t" style="left:73.60px;top:645.75px;font-size:7.9px;color:#0b5cd5;font-weight:normal;transform:scaleY(1.1);transform-origin:0 5.65px;">Erin</div>
<div class="t" style="left:190.50px;top:645.75px;font-size:7.9px;color:#0b5cd5;font-weight:normal;transform:scaleY(1.1);transform-origin:0 5.65px;">Marie</div>
<div class="t" style="left:307.40px;top:645.75px;font-size:7.9px;color:#0b5cd5;font-weight:normal;transform:scaleY(1.1);transform-origin:0 5.65px;">Jays Shop</div>
<svg class="r" style="left:441.90px;top:489.70px" width="19" height="19" viewBox="0 0 19 19"><circle cx="9.5" cy="9.5" r="9.5" fill="#0f8cfa"/><circle cx="9.5" cy="6" r="1.5" fill="#fff"/><path d="M3.6 8.3 H15.4 L11.3 11.3 L12.9 15.4 L9.5 13 L6.1 15.4 L7.7 11.3Z" fill="#fff"/></svg>
<div class="r" style="left:468.00px;top:490.10px;width:264.00px;height:18.20px;border:1px solid #9c9c9c;border-radius:4px;background:#fff;"></div>
<div class="t" style="left:473.30px;top:496.96px;font-size:7.8px;color:#2e2e2e;font-weight:normal;transform:scaleY(1.1);transform-origin:0 5.64px;">My Leads</div>
<svg class="r" style="left:718.70px;top:495.70px" width="9" height="9" viewBox="0 0 9 9"><circle cx="3.6" cy="3.6" r="2.8" fill="none" stroke="#444" stroke-width="1.1"/><path d="M5.6 5.6 L8.2 8.2" stroke="#444" stroke-width="1.3" stroke-linecap="round"/></svg>
<div class="r" style="left:737.00px;top:489.50px;width:35.00px;height:18.70px;border:1px solid #9c9c9c;border-radius:9.5px;background:#fff;"></div>
<div class="t" style="left:654.50px;width:200px;text-align:center;top:496.88px;font-size:7.7px;color:#0b5cd5;font-weight:normal;transform:scaleY(1.1);transform-origin:0 5.62px;">New</div>
<svg class="r" style="left:774.20px;top:489.40px" width="19" height="19" viewBox="0 0 19 19"><circle cx="9.5" cy="9.5" r="9" fill="#fff" stroke="#9c9c9c" stroke-width="0.9"/><path d="M6.3 8.2 H12.7 L9.5 11.4Z" fill="#0b5cd5"/></svg>
<div class="t" style="left:446.60px;top:522.35px;font-size:8.0px;color:#444444;font-weight:normal;transform:scaleY(1.1);transform-origin:0 5.65px;-webkit-text-stroke-width:0.5px;">Lead Status</div>
<div class="t" style="left:563.75px;top:522.35px;font-size:8.0px;color:#444444;font-weight:normal;transform:scaleY(1.1);transform-origin:0 5.65px;-webkit-text-stroke-width:0.5px;">First Name</div>
<div class="t" style="left:681.00px;top:522.35px;font-size:8.0px;color:#444444;font-weight:normal;transform:scaleY(1.1);transform-origin:0 5.65px;-webkit-text-stroke-width:0.5px;">Last Name</div>
<div class="r" style="left:441.90px;top:534.00px;width:351.00px;height:1.00px;background:#e5e5e5;"></div>
<div class="t" style="left:446.60px;top:542.25px;font-size:7.9px;color:#444444;font-weight:normal;transform:scaleY(1.1);transform-origin:0 5.65px;">New</div>
<div class="t" style="left:563.75px;top:542.25px;font-size:7.9px;color:#0b5cd5;font-weight:normal;transform:scaleY(1.1);transform-origin:0 5.65px;">Elizabeth</div>
<div class="t" style="left:681.00px;top:542.25px;font-size:7.9px;color:#0b5cd5;font-weight:normal;transform:scaleY(1.1);transform-origin:0 5.65px;">Powers</div>
<div class="t" style="left:446.60px;top:562.95px;font-size:7.9px;color:#444444;font-weight:normal;transform:scaleY(1.1);transform-origin:0 5.65px;">New</div>
<div class="t" style="left:563.75px;top:562.95px;font-size:7.9px;color:#0b5cd5;font-weight:normal;transform:scaleY(1.1);transform-origin:0 5.65px;">Christen</div>
<div class="t" style="left:681.00px;top:562.95px;font-size:7.9px;color:#0b5cd5;font-weight:normal;transform:scaleY(1.1);transform-origin:0 5.65px;">Johns</div>
<div class="t" style="left:446.60px;top:583.65px;font-size:7.9px;color:#444444;font-weight:normal;transform:scaleY(1.1);transform-origin:0 5.65px;">New</div>
<div class="t" style="left:563.75px;top:583.65px;font-size:7.9px;color:#0b5cd5;font-weight:normal;transform:scaleY(1.1);transform-origin:0 5.65px;">Jerry</div>
<div class="t" style="left:681.00px;top:583.65px;font-size:7.9px;color:#0b5cd5;font-weight:normal;transform:scaleY(1.1);transform-origin:0 5.65px;">Seinfeld</div>
<div class="t" style="left:446.60px;top:604.35px;font-size:7.9px;color:#444444;font-weight:normal;transform:scaleY(1.1);transform-origin:0 5.65px;">New</div>
<div class="t" style="left:563.75px;top:604.35px;font-size:7.9px;color:#0b5cd5;font-weight:normal;transform:scaleY(1.1);transform-origin:0 5.65px;">George</div>
<div class="t" style="left:681.00px;top:604.35px;font-size:7.9px;color:#0b5cd5;font-weight:normal;transform:scaleY(1.1);transform-origin:0 5.65px;">Costanz</div>
<div class="t" style="left:446.60px;top:625.05px;font-size:7.9px;color:#444444;font-weight:normal;transform:scaleY(1.1);transform-origin:0 5.65px;">New</div>
<div class="t" style="left:563.75px;top:625.05px;font-size:7.9px;color:#0b5cd5;font-weight:normal;transform:scaleY(1.1);transform-origin:0 5.65px;">Elaine</div>
<div class="t" style="left:681.00px;top:625.05px;font-size:7.9px;color:#0b5cd5;font-weight:normal;transform:scaleY(1.1);transform-origin:0 5.65px;">Benes</div>
<div class="t" style="left:446.60px;top:645.75px;font-size:7.9px;color:#444444;font-weight:normal;transform:scaleY(1.1);transform-origin:0 5.65px;">New</div>
<div class="t" style="left:563.75px;top:645.75px;font-size:7.9px;color:#0b5cd5;font-weight:normal;transform:scaleY(1.1);transform-origin:0 5.65px;">Kozmo</div>
<div class="t" style="left:681.00px;top:645.75px;font-size:7.9px;color:#0b5cd5;font-weight:normal;transform:scaleY(1.1);transform-origin:0 5.65px;">Kramer</div>
<div class="t" style="left:818.10px;top:495.09px;font-size:11.5px;color:#22385a;font-weight:normal;transform:scaleY(1.06);transform-origin:0 8.81px;-webkit-text-stroke-width:0.04px;">Recommended Actions</div>
<svg class="r" style="left:1145.50px;top:491.80px" width="19" height="19" viewBox="0 0 19 19"><circle cx="9.5" cy="9.5" r="9" fill="#fff" stroke="#9c9c9c" stroke-width="0.9"/><path d="M6.3 8.2 H12.7 L9.5 11.4Z" fill="#0b5cd5"/></svg>
<div class="r" style="left:815.30px;top:523.70px;width:351.40px;height:1.00px;background:#e6e6e6;"></div>
<div class="r" style="left:815.30px;top:558.60px;width:351.40px;height:1.00px;background:#e6e6e6;"></div>
<div class="r" style="left:815.30px;top:593.00px;width:351.40px;height:1.00px;background:#e6e6e6;"></div>
<div class="r" style="left:815.30px;top:627.40px;width:351.40px;height:1.00px;background:#e6e6e6;"></div>
<svg class="r" style="left:819.30px;top:537.10px" width="4.5" height="6.4" viewBox="0 0 4.5 6.4"><path d="M0.6 0.6 L3.6 3.2 L0.6 5.8" fill="none" stroke="#0b5cd5" stroke-width="1.2"/></svg>
<svg class="r" style="left:830.50px;top:533.20px" width="14.2" height="14.2" viewBox="0 0 14.2 14.2"><g transform="scale(0.7473684210526316)"><circle cx="9.5" cy="9.5" r="9.5" fill="#fd4a33"/><path d="M4.5 6.5 L6.5 9 L9.5 5.3 L12.5 9 L14.5 6.5 L14 12 H5Z" fill="#fff"/><rect x="5.3" y="12.8" width="8.4" height="1.6" fill="#fff"/><circle cx="4.5" cy="6.3" r="0.9" fill="#fff"/><circle cx="9.5" cy="4.8" r="0.9" fill="#fff"/><circle cx="14.5" cy="6.3" r="0.9" fill="#fff"/></g></svg>
<div class="t" style="left:852.00px;top:531.17px;font-size:7.5px;color:#444444;font-weight:normal;transform:scaleY(1.1);transform-origin:0 5.63px;">Opportunity is overdue</div>
<div class="t" style="left:852.80px;top:542.85px;font-size:8.0px;color:#0b5cd5;font-weight:normal;transform:scaleY(1.1);transform-origin:0 5.65px;">Renewal</div>
<div class="r" style="left:852.8px;top:551.70px;height:0;border-top:1px dotted #93b8ee;width:30.3px"></div>
<div class="r" style="left:1129.60px;top:529.00px;width:37.10px;height:19.00px;border:1px solid #9c9c9c;border-radius:9.5px;background:#fff;"></div>
<div class="r" style="left:1148.20px;top:529.00px;width:1.00px;height:19.00px;background:#9c9c9c;"></div>
<svg class="r" style="left:1134.50px;top:534.50px" width="8" height="8" viewBox="0 0 8 8"><path d="M0.8 7.2 L1.2 5.3 L5.6 0.9 L7.1 2.4 L2.7 6.8Z" fill="#0b5cd5"/></svg>
<svg class="r" style="left:1154.50px;top:535.50px" width="6" height="6" viewBox="0 0 6 6"><path d="M0.6 0.6 L5.4 5.4 M5.4 0.6 L0.6 5.4" stroke="#0b5cd5" stroke-width="1.2"/></svg>
<svg class="r" style="left:819.30px;top:571.70px" width="4.5" height="6.4" viewBox="0 0 4.5 6.4"><path d="M0.6 0.6 L3.6 3.2 L0.6 5.8" fill="none" stroke="#0b5cd5" stroke-width="1.2"/></svg>
<svg class="r" style="left:830.50px;top:567.80px" width="14.2" height="14.2" viewBox="0 0 14.2 14.2"><g transform="scale(0.7473684210526316)"><circle cx="9.5" cy="9.5" r="9.5" fill="#fd4a33"/><path d="M4.5 6.5 L6.5 9 L9.5 5.3 L12.5 9 L14.5 6.5 L14 12 H5Z" fill="#fff"/><rect x="5.3" y="12.8" width="8.4" height="1.6" fill="#fff"/><circle cx="4.5" cy="6.3" r="0.9" fill="#fff"/><circle cx="9.5" cy="4.8" r="0.9" fill="#fff"/><circle cx="14.5" cy="6.3" r="0.9" fill="#fff"/></g></svg>
<div class="t" style="left:852.00px;top:565.77px;font-size:7.5px;color:#444444;font-weight:normal;transform:scaleY(1.1);transform-origin:0 5.63px;">Opportunity is overdue</div>
<div class="t" style="left:852.80px;top:577.45px;font-size:8.0px;color:#0b5cd5;font-weight:normal;transform:scaleY(1.1);transform-origin:0 5.65px;">Upsell for Additional Services</div>
<div class="r" style="left:852.8px;top:586.30px;height:0;border-top:1px dotted #93b8ee;width:104.3px"></div>
<div class="r" style="left:1129.60px;top:563.60px;width:37.10px;height:19.00px;border:1px solid #9c9c9c;border-radius:9.5px;background:#fff;"></div>
<div class="r" style="left:1148.20px;top:563.60px;width:1.00px;height:19.00px;background:#9c9c9c;"></div>
<svg class="r" style="left:1134.50px;top:569.10px" width="8" height="8" viewBox="0 0 8 8"><path d="M0.8 7.2 L1.2 5.3 L5.6 0.9 L7.1 2.4 L2.7 6.8Z" fill="#0b5cd5"/></svg>
<svg class="r" style="left:1154.50px;top:570.10px" width="6" height="6" viewBox="0 0 6 6"><path d="M0.6 0.6 L5.4 5.4 M5.4 0.6 L0.6 5.4" stroke="#0b5cd5" stroke-width="1.2"/></svg>
<svg class="r" style="left:819.30px;top:606.30px" width="4.5" height="6.4" viewBox="0 0 4.5 6.4"><path d="M0.6 0.6 L3.6 3.2 L0.6 5.8" fill="none" stroke="#0b5cd5" stroke-width="1.2"/></svg>
<svg class="r" style="left:830.50px;top:602.40px" width="14.2" height="14.2" viewBox="0 0 14.2 14.2"><g transform="scale(0.7473684210526316)"><circle cx="9.5" cy="9.5" r="9.5" fill="#fd4a33"/><path d="M4.5 6.5 L6.5 9 L9.5 5.3 L12.5 9 L14.5 6.5 L14 12 H5Z" fill="#fff"/><rect x="5.3" y="12.8" width="8.4" height="1.6" fill="#fff"/><circle cx="4.5" cy="6.3" r="0.9" fill="#fff"/><circle cx="9.5" cy="4.8" r="0.9" fill="#fff"/><circle cx="14.5" cy="6.3" r="0.9" fill="#fff"/></g></svg>
<div class="t" style="left:852.00px;top:600.37px;font-size:7.5px;color:#444444;font-weight:normal;transform:scaleY(1.1);transform-origin:0 5.63px;">30 days without any activity</div>
<div class="t" style="left:852.80px;top:612.05px;font-size:8.0px;color:#0b5cd5;font-weight:normal;transform:scaleY(1.1);transform-origin:0 5.65px;">New Business</div>
<div class="r" style="left:852.8px;top:620.90px;height:0;border-top:1px dotted #93b8ee;width:50px"></div>
<div class="r" style="left:1111.60px;top:598.20px;width:55.10px;height:19.00px;border:1px solid #9c9c9c;border-radius:9.5px;background:#fff;"></div>
<div class="r" style="left:1130.40px;top:598.20px;width:1.00px;height:19.00px;background:#555;"></div>
<div class="r" style="left:1148.20px;top:598.20px;width:1.00px;height:19.00px;background:#9c9c9c;"></div>
<svg class="r" style="left:1116.50px;top:604.20px" width="9" height="7" viewBox="0 0 9 7"><g fill="#0b5cd5"><rect x="3.5" y="0.3" width="5.5" height="1"/><rect x="3.5" y="3" width="5.5" height="1"/><rect x="3.5" y="5.7" width="5.5" height="1"/></g><path d="M0.3 0.8 L1.2 1.7 L2.6 0" fill="none" stroke="#0b5cd5" stroke-width="0.8"/><rect x="0.6" y="3" width="1.4" height="1" fill="#0b5cd5"/><rect x="0.6" y="5.7" width="1.4" height="1" fill="#0b5cd5"/></svg>
<svg class="r" style="left:1135.50px;top:603.70px" width="8" height="8" viewBox="0 0 8 8"><rect x="0.5" y="1.3" width="7" height="6.5" rx="0.6" fill="#0b5cd5"/><rect x="1.7" y="0" width="1" height="2" fill="#0b5cd5"/><rect x="5.3" y="0" width="1" height="2" fill="#0b5cd5"/><path d="M1.3 3.6 H6.7" stroke="#fff" stroke-width="0.6"/></svg>
<svg class="r" style="left:1154.50px;top:604.70px" width="6" height="6" viewBox="0 0 6 6"><path d="M0.6 0.6 L5.4 5.4 M5.4 0.6 L0.6 5.4" stroke="#0b5cd5" stroke-width="1.2"/></svg>
<div class="r" style="left:44.00px;top:650.00px;width:1156.00px;height:25.00px;background:#fff;border-top:1px solid #dcdcdc;"></div>
<svg class="r" style="left:52.00px;top:660.50px" width="8" height="7" viewBox="0 0 8 7"><g fill="#555"><rect x="3" y="0.5" width="5" height="1"/><rect x="3" y="3" width="5" height="1"/><rect x="3" y="5.5" width="5" height="1"/></g><path d="M0 0.8 L0.8 1.6 L2 0" fill="none" stroke="#555" stroke-width="0.7"/><rect x="0.3" y="3" width="1.4" height="1" fill="#555"/><rect x="0.3" y="5.5" width="1.4" height="1" fill="#555"/></svg>
<div class="t" style="left:64.80px;top:660.06px;font-size:8.1px;color:#4a4a4a;font-weight:normal;transform:scaleY(1.1);transform-origin:0 5.64px;-webkit-text-stroke-width:0.5px;">To Do List</div>
<div class="r" style="left:44.00px;top:0.00px;width:1.00px;height:675.00px;background:#848d9b;"></div>
</body></html>
